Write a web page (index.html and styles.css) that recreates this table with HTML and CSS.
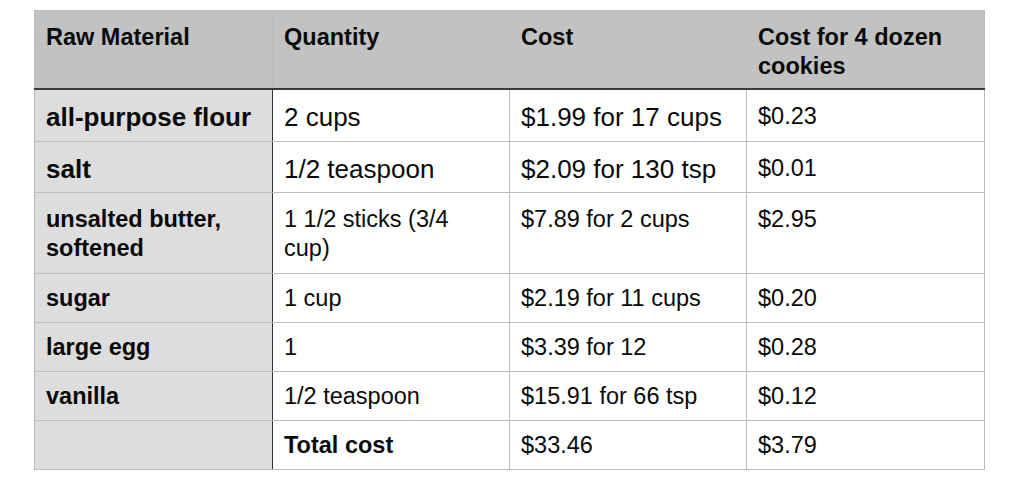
FILE: index.html
```html
<!DOCTYPE html>
<html>
<head>
<meta charset="utf-8">
<link rel="stylesheet" href="styles.css">
</head>
<body>
<div class="page">
<table class="cost">
<colgroup><col class="c1"><col class="c2"><col class="c3"><col class="c4"></colgroup>
<thead>
<tr><th>Raw Material</th><th>Quantity</th><th>Cost</th><th>Cost for 4 dozen cookies</th></tr>
</thead>
<tbody>
<tr class="big first"><td class="name">all-purpose flour</td><td>2 cups</td><td>$1.99 for 17 cups</td><td class="sm">$0.23</td></tr>
<tr class="big"><td class="name">salt</td><td>1/2 teaspoon</td><td>$2.09 for 130 tsp</td><td class="sm">$0.01</td></tr>
<tr class="tall"><td class="name">unsalted butter, softened</td><td>1 1/2 sticks (3/4 cup)</td><td>$7.89 for 2 cups</td><td>$2.95</td></tr>
<tr class="std"><td class="name">sugar</td><td>1 cup</td><td>$2.19 for 11 cups</td><td>$0.20</td></tr>
<tr class="std"><td class="name">large egg</td><td>1</td><td>$3.39 for 12</td><td>$0.28</td></tr>
<tr class="std"><td class="name">vanilla</td><td>1/2 teaspoon</td><td>$15.91 for 66 tsp</td><td>$0.12</td></tr>
<tr class="std"><td class="name"></td><td class="bold">Total cost</td><td>$33.46</td><td>$3.79</td></tr>
</tbody>
</table>
</div>
</body>
</html>
```
FILE: styles.css
```css
html, body { margin: 0; padding: 0; background: #ffffff; }
.page { padding: 10px 0 0 34px; }
.cost {
  border-collapse: collapse;
  table-layout: fixed;
  width: 950px;
  font-family: "Liberation Sans", Arial, sans-serif;
  font-size: 23.5px;
  line-height: 29px;
  color: #0a0a0a;
  border: 1px solid #b0b0b0;
}
.c1 { width: 238px; }
.c2 { width: 237px; }
.c3 { width: 237px; }
.c4 { width: 238px; }
.cost th, .cost td {
  text-align: left;
  vertical-align: top;
  padding: 12px 12px 7px 11px;
  border: 1px solid #bdbdbd;
}
.cost th {
  background: #c1c2c1;
  font-weight: bold;
  border-bottom: 2px solid #3a3a3a;
}
.cost tr.tall td { padding-bottom: 10px; }
.cost tr.std td { padding-top: 10px; padding-bottom: 9px; }
.cost td.name {
  background: #dddddd;
  font-weight: bold;
  border-right: 1px solid #333333;
}
.cost td.bold { font-weight: bold; }
.cost tr.big td { font-size: 26px; line-height: 31px; padding-top: 12px; padding-bottom: 7px; }
.cost tr.big.first td { padding-bottom: 8px; }
.cost tr.big td.sm { font-size: 23.5px; line-height: 29px; }
```
